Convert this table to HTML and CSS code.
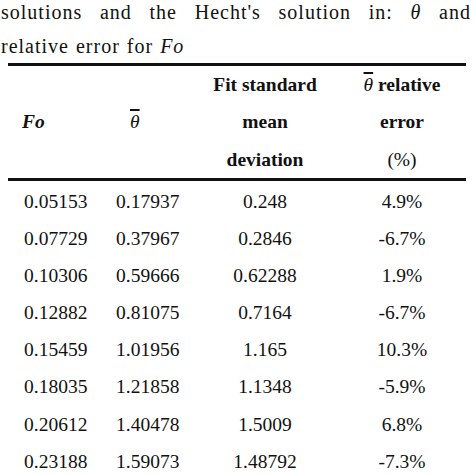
FILE: index.html
```html
<!DOCTYPE html>
<html>
<head>
<meta charset="utf-8">
<link rel="stylesheet" href="styles.css">
</head>
<body>
<div class="caption">
  <div class="line first">solutions and the Hecht's solution in: <i>θ</i> and</div>
  <div class="line">relative error for <i>Fo</i></div>
</div>
<table class="data">
  <colgroup>
    <col class="c1"><col class="c2"><col class="c3"><col class="c4">
  </colgroup>
  <thead>
    <tr>
      <th class="h1"><i>Fo</i></th>
      <th class="h2"><i class="bar">θ</i></th>
      <th class="h3">Fit standard<br>mean<br>deviation</th>
      <th class="h4"><i class="bar th">θ</i> relative<br>error<br><span class="norm">(%)</span></th>
    </tr>
  </thead>
  <tbody>
    <tr><td>0.05153</td><td>0.17937</td><td>0.248</td><td>4.9%</td></tr>
    <tr><td>0.07729</td><td>0.37967</td><td>0.2846</td><td>-6.7%</td></tr>
    <tr><td>0.10306</td><td>0.59666</td><td>0.62288</td><td>1.9%</td></tr>
    <tr><td>0.12882</td><td>0.81075</td><td>0.7164</td><td>-6.7%</td></tr>
    <tr><td>0.15459</td><td>1.01956</td><td>1.165</td><td>10.3%</td></tr>
    <tr><td>0.18035</td><td>1.21858</td><td>1.1348</td><td>-5.9%</td></tr>
    <tr><td>0.20612</td><td>1.40478</td><td>1.5009</td><td>6.8%</td></tr>
    <tr><td>0.23188</td><td>1.59073</td><td>1.48792</td><td>-7.3%</td></tr>
  </tbody>
</table>
</body>
</html>
```
FILE: styles.css
```css
html, body {
  margin: 0;
  padding: 0;
  background: #ffffff;
  color: #111111;
  font-family: "Liberation Serif", "Times New Roman", serif;
  overflow: hidden;
}

.caption {
  margin-top: -5px;
  padding: 0 3px 0 1px;
  font-size: 20px;
  line-height: 34px;
  letter-spacing: 1px;
  word-spacing: 1px;
}

.caption .first {
  text-align: justify;
  text-align-last: justify;
}

.data {
  margin: 0 8px;
  width: 458px;
  border-collapse: collapse;
  table-layout: fixed;
  font-size: 19.5px;
  border-top: 3px solid #111;
}

.c1 { width: 95px; }
.c2 { width: 97px; }
.c3 { width: 130px; }
.c4 { width: 136px; }

.data thead tr {
  border-bottom: 3px solid #111;
}

.data th {
  font-weight: bold;
  line-height: 37.33px;
  padding: 0;
  vertical-align: middle;
  text-align: center;
}

.data th.h1 { text-align: left; padding-left: 14px; }
.data th.h2 { text-align: left; padding-left: 27px; }
.data th.h4 { padding-left: 8px; }

.bar {
  font-weight: normal;
  text-decoration: overline;
  text-decoration-thickness: 1.5px;
}

.norm { font-weight: normal; }

.data td {
  padding: 0;
  height: 37.1px;
  line-height: 37.1px;
  text-align: center;
  white-space: nowrap;
}

.data tbody tr:first-child td {
  padding-top: 2px;
}

.data td:nth-child(1) { text-align: left; padding-left: 16px; }
.data td:nth-child(2) { text-align: left; padding-left: 13px; }
.data td:nth-child(4) { padding-left: 8px; }
```
